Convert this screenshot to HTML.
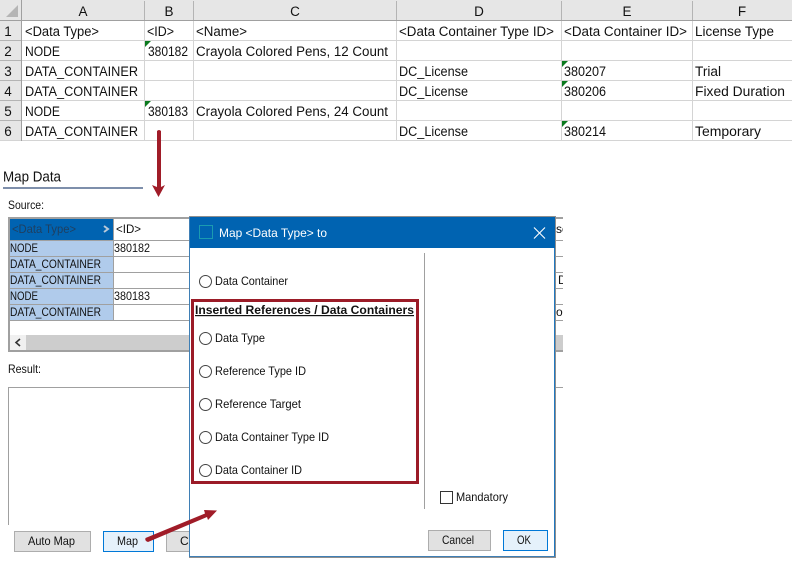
<!DOCTYPE html>
<html><head><meta charset="utf-8"><style>
html,body{margin:0;padding:0;background:#fff;width:792px;height:565px;overflow:hidden}
svg{display:block}
text{font-family:"Liberation Sans",sans-serif;fill:#111}
.x text{font-size:13.5px}
.s text{font-size:12px}
</style></head><body>
<svg width="792" height="565" viewBox="0 0 792 565" xmlns="http://www.w3.org/2000/svg">
<rect width="792" height="565" fill="#fff"/>
<!-- Excel header -->
<rect x="0" y="0" width="792" height="20" fill="#e6e6e6"/>
<rect x="0" y="20" width="21" height="121" fill="#e6e6e6"/>
<polygon points="18,5 18,17 6,17" fill="#b5b5b5"/>
<g fill="#d4d4d4">
<rect x="22" y="40" width="770" height="1"/><rect x="22" y="60" width="770" height="1"/><rect x="22" y="80" width="770" height="1"/><rect x="22" y="100" width="770" height="1"/><rect x="22" y="120" width="770" height="1"/><rect x="0" y="140" width="792" height="1"/>
<rect x="144" y="20" width="1" height="121"/><rect x="193" y="20" width="1" height="121"/><rect x="396" y="20" width="1" height="121"/><rect x="561" y="20" width="1" height="121"/><rect x="692" y="20" width="1" height="121"/>
</g>
<g fill="#b4b4b4">
<rect x="0" y="40" width="21" height="1"/><rect x="0" y="60" width="21" height="1"/><rect x="0" y="80" width="21" height="1"/><rect x="0" y="100" width="21" height="1"/><rect x="0" y="120" width="21" height="1"/>
<rect x="144" y="1" width="1" height="19"/><rect x="193" y="1" width="1" height="19"/><rect x="396" y="1" width="1" height="19"/><rect x="561" y="1" width="1" height="19"/><rect x="692" y="1" width="1" height="19"/>
</g>
<rect x="21" y="0" width="1" height="141" fill="#a0a0a0"/>
<rect x="0" y="20" width="792" height="1" fill="#a0a0a0"/>
<g class="x">
<g text-anchor="middle">
<text x="83" y="16">A</text><text x="169" y="16">B</text><text x="295" y="16">C</text><text x="479" y="16">D</text><text x="627" y="16">E</text><text x="742" y="16">F</text>
<text x="8" y="36">1</text><text x="8" y="56">2</text><text x="8" y="76">3</text><text x="8" y="96">4</text><text x="8" y="116">5</text><text x="8" y="136">6</text>
</g>
<text x="25" y="36" textLength="74" lengthAdjust="spacingAndGlyphs">&lt;Data Type&gt;</text>
<text x="147" y="36" textLength="27" lengthAdjust="spacingAndGlyphs">&lt;ID&gt;</text>
<text x="196" y="36" textLength="51" lengthAdjust="spacingAndGlyphs">&lt;Name&gt;</text>
<text x="399" y="36" textLength="155" lengthAdjust="spacingAndGlyphs">&lt;Data Container Type ID&gt;</text>
<text x="564" y="36" textLength="123" lengthAdjust="spacingAndGlyphs">&lt;Data Container ID&gt;</text>
<text x="695" y="36" textLength="79" lengthAdjust="spacingAndGlyphs">License Type</text>
<text x="25" y="56" textLength="35" lengthAdjust="spacingAndGlyphs">NODE</text>
<text x="148" y="56" textLength="40" lengthAdjust="spacingAndGlyphs">380182</text>
<text x="196" y="56" textLength="192" lengthAdjust="spacingAndGlyphs">Crayola Colored Pens, 12 Count</text>
<text x="25" y="76" textLength="113" lengthAdjust="spacingAndGlyphs">DATA_CONTAINER</text>
<text x="399" y="76" textLength="69" lengthAdjust="spacingAndGlyphs">DC_License</text>
<text x="564" y="76" textLength="42" lengthAdjust="spacingAndGlyphs">380207</text>
<text x="695" y="76" textLength="26" lengthAdjust="spacingAndGlyphs">Trial</text>
<text x="25" y="96" textLength="113" lengthAdjust="spacingAndGlyphs">DATA_CONTAINER</text>
<text x="399" y="96" textLength="69" lengthAdjust="spacingAndGlyphs">DC_License</text>
<text x="564" y="96" textLength="42" lengthAdjust="spacingAndGlyphs">380206</text>
<text x="695" y="96" textLength="90" lengthAdjust="spacingAndGlyphs">Fixed Duration</text>
<text x="25" y="116" textLength="35" lengthAdjust="spacingAndGlyphs">NODE</text>
<text x="148" y="116" textLength="40" lengthAdjust="spacingAndGlyphs">380183</text>
<text x="196" y="116" textLength="192" lengthAdjust="spacingAndGlyphs">Crayola Colored Pens, 24 Count</text>
<text x="25" y="136" textLength="113" lengthAdjust="spacingAndGlyphs">DATA_CONTAINER</text>
<text x="399" y="136" textLength="69" lengthAdjust="spacingAndGlyphs">DC_License</text>
<text x="564" y="136" textLength="42" lengthAdjust="spacingAndGlyphs">380214</text>
<text x="695" y="136" textLength="66" lengthAdjust="spacingAndGlyphs">Temporary</text>
</g>
<g fill="#0b7a1e">
<polygon points="145,41 151,41 145,47"/><polygon points="145,101 151,101 145,107"/>
<polygon points="562,61 568,61 562,67"/><polygon points="562,81 568,81 562,87"/><polygon points="562,121 568,121 562,127"/>
</g>
<!-- Map Data -->
<text x="3" y="181.500" style="font-size:14.5px" textLength="58" lengthAdjust="spacingAndGlyphs">Map Data</text>
<rect x="3" y="187" width="140" height="2" fill="#7e8fab"/>
<g class="s">
<text x="8" y="209" textLength="36" lengthAdjust="spacingAndGlyphs">Source:</text>
<text x="8" y="373" textLength="33" lengthAdjust="spacingAndGlyphs">Result:</text>
</g>
<!-- Source grid -->
<rect x="8" y="217" width="555" height="2" fill="#a0a0a0"/>
<rect x="8" y="217" width="2" height="135" fill="#a0a0a0"/>
<rect x="8" y="350" width="555" height="2" fill="#a0a0a0"/>
<rect x="10" y="219" width="103" height="21" fill="#0063b1"/>
<rect x="10" y="240" width="103" height="80" fill="#b0cbeb"/>
<g fill="#a0a0a0">
<rect x="10" y="240" width="553" height="1"/><rect x="10" y="256" width="553" height="1"/><rect x="10" y="272" width="553" height="1"/><rect x="10" y="288" width="553" height="1"/><rect x="10" y="304" width="553" height="1"/><rect x="10" y="320" width="553" height="1"/>
<rect x="113" y="219" width="1" height="101"/>
</g>
<rect x="10" y="335" width="16" height="15" fill="#f0f0f0"/>
<rect x="26" y="335" width="537" height="15" fill="#cdcdcd"/>
<path d="M20 339 L16 342.500 L20 346" fill="none" stroke="#333" stroke-width="1.6"/>
<g class="s">
<text x="12" y="233" style="fill:#1f3f5f" textLength="64" lengthAdjust="spacingAndGlyphs">&lt;Data Type&gt;</text>
<path d="M104 226 L108 229 L104 232" fill="none" stroke="#b8c8d8" stroke-width="2"/>
<text x="116" y="233" textLength="25" lengthAdjust="spacingAndGlyphs">&lt;ID&gt;</text>
<text x="10" y="252" textLength="28" lengthAdjust="spacingAndGlyphs">NODE</text>
<text x="114" y="252" textLength="36" lengthAdjust="spacingAndGlyphs">380182</text>
<text x="10" y="268" textLength="91" lengthAdjust="spacingAndGlyphs">DATA_CONTAINER</text>
<text x="10" y="284" textLength="91" lengthAdjust="spacingAndGlyphs">DATA_CONTAINER</text>
<text x="10" y="300" textLength="28" lengthAdjust="spacingAndGlyphs">NODE</text>
<text x="114" y="300" textLength="36" lengthAdjust="spacingAndGlyphs">380183</text>
<text x="10" y="316" textLength="91" lengthAdjust="spacingAndGlyphs">DATA_CONTAINER</text>
<text x="556" y="233">se</text>
<text x="558" y="284">D</text>
<text x="556" y="316">or</text>
</g>
<rect x="563" y="219" width="10" height="115" fill="#fff"/>
<!-- Result box -->
<rect x="8" y="387" width="555" height="1" fill="#a0a0a0"/>
<rect x="8" y="387" width="1" height="138" fill="#a0a0a0"/>
<!-- Bottom buttons -->
<rect x="14.500" y="531.500" width="76" height="20" fill="#e1e1e1" stroke="#adadad"/>
<rect x="103.500" y="531.500" width="50" height="20" fill="#e5f1fb" stroke="#0078d7"/>
<rect x="166.500" y="531.500" width="40" height="20" fill="#e1e1e1" stroke="#adadad"/>
<g class="s">
<text x="28" y="545" textLength="47" lengthAdjust="spacingAndGlyphs">Auto Map</text>
<text x="117" y="545" textLength="21" lengthAdjust="spacingAndGlyphs">Map</text>
<text x="180" y="545">C</text>
</g>
<!-- Dialog -->
<rect x="189" y="216" width="367" height="342" fill="#8f8f8f"/>
<rect x="190" y="217" width="365" height="340" fill="#fff"/>
<rect x="189" y="217" width="1" height="340" fill="#3f7fb5"/>
<rect x="554" y="217" width="1" height="340" fill="#1f78c0"/>
<rect x="189" y="556" width="366" height="1" fill="#3f7fb5"/>
<rect x="190" y="217" width="365" height="31" fill="#0063b1"/>
<rect x="199.500" y="225.500" width="13" height="13" fill="none" stroke="#1b9bb0"/>
<text x="219" y="237" style="font-size:12px;fill:#fff" textLength="108" lengthAdjust="spacingAndGlyphs">Map &lt;Data Type&gt; to</text>
<path d="M534 227.500 L545 238.500 M545 227.500 L534 238.500" stroke="#fff" stroke-width="1.1" fill="none"/>
<rect x="424" y="253" width="1" height="256" fill="#a0a0a0"/>
<rect x="192.500" y="300.500" width="225" height="182" fill="none" stroke="#9b1b27" stroke-width="3"/>
<g fill="#fff" stroke="#444" stroke-width="1">
<circle cx="205.500" cy="281.500" r="6"/><circle cx="205.500" cy="338.500" r="6"/><circle cx="205.500" cy="371.500" r="6"/><circle cx="205.500" cy="404.500" r="6"/><circle cx="205.500" cy="437.500" r="6"/><circle cx="205.500" cy="470.500" r="6"/>
</g>
<g class="s">
<text x="215" y="285" textLength="73" lengthAdjust="spacingAndGlyphs">Data Container</text>
<text x="195" y="314" style="font-weight:bold;text-decoration:underline" textLength="219" lengthAdjust="spacingAndGlyphs">Inserted References / Data Containers</text>
<text x="215" y="342" textLength="50" lengthAdjust="spacingAndGlyphs">Data Type</text>
<text x="215" y="375" textLength="91" lengthAdjust="spacingAndGlyphs">Reference Type ID</text>
<text x="215" y="408" textLength="86" lengthAdjust="spacingAndGlyphs">Reference Target</text>
<text x="215" y="441" textLength="114" lengthAdjust="spacingAndGlyphs">Data Container Type ID</text>
<text x="215" y="474" textLength="87" lengthAdjust="spacingAndGlyphs">Data Container ID</text>
<text x="456" y="501" textLength="52" lengthAdjust="spacingAndGlyphs">Mandatory</text>
</g>
<rect x="440.500" y="491.500" width="12" height="12" fill="#fff" stroke="#333"/>
<rect x="428.500" y="530.500" width="62" height="20" fill="#e1e1e1" stroke="#adadad"/>
<rect x="503.500" y="530.500" width="44" height="20" fill="#e5f1fb" stroke="#0078d7"/>
<g class="s">
<text x="442" y="544" textLength="32" lengthAdjust="spacingAndGlyphs">Cancel</text>
<text x="517" y="544" textLength="14" lengthAdjust="spacingAndGlyphs">OK</text>
</g>
<!-- Arrows -->
<g fill="#a01c28" stroke="none">
<path d="M157 131 Q159 129 161 131 L161 187 L165 185 L158.500 197 L152 185 L157 187 Z"/>
<path d="M145.500 538 L205 513.500 L204 510 L217 510.500 L208 520 L207 517 L148 542 Q144.500 541 145.500 538 Z"/>
</g>
</svg>
</body></html>
